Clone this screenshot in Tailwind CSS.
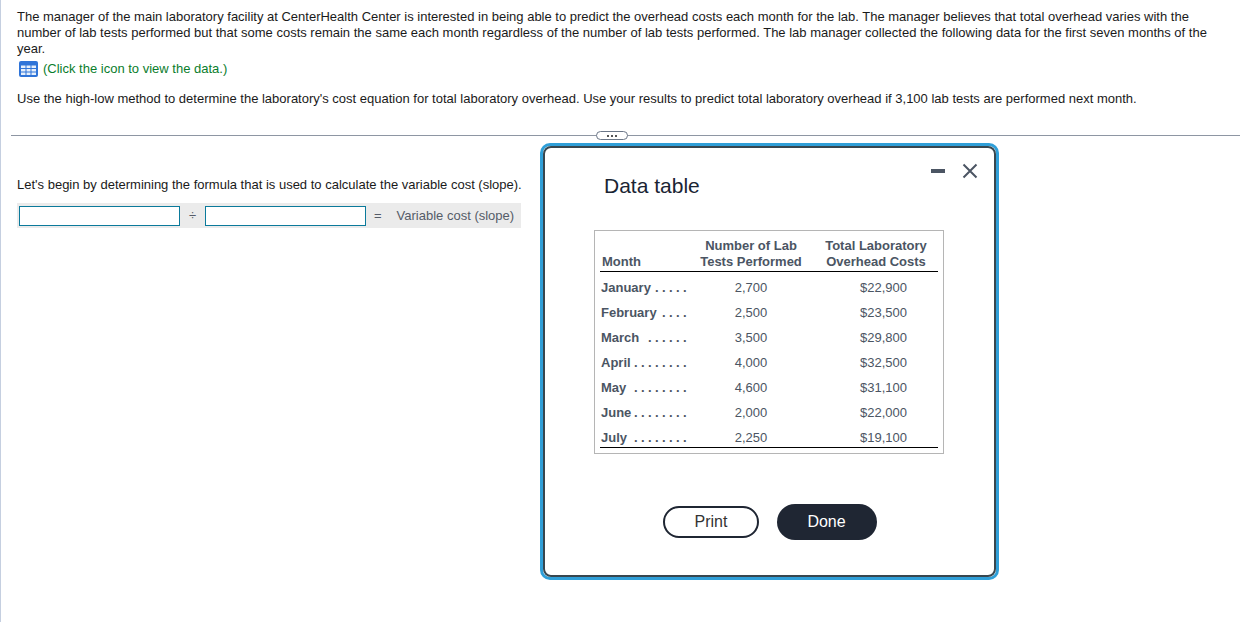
<!DOCTYPE html>
<html lang="en">
<head>
<meta charset="UTF-8">
<title>Data table</title>
<script src="https://cdn.jsdelivr.net/npm/@tailwindcss/browser@4"></script>
</head>
<body class="bg-white font-['Liberation_Sans',Arial,sans-serif] text-[13px] leading-[16px] text-[#1a1a1a]">
<div class="relative h-[622px] w-[1246px] overflow-hidden border-l border-[#c5cfe0]">

  <!-- question text -->
  <div class="pl-[16px] pr-[26px] pt-[9px]">
    <p>The manager of the main laboratory facility at CenterHealth Center is interested in being able to predict the overhead costs each month for the lab. The manager believes that total overhead varies with the number of lab tests performed but that some costs remain the same each month regardless of the number of lab tests performed. The lab manager collected the following data for the first seven months of the year.</p>
    <div class="mt-[4px] flex items-center gap-[5px] text-[#0a7d2c]">
      <svg width="19" height="16" viewBox="0 0 19 16" class="ml-[2px]">
        <rect x="0" y="0" width="19" height="16" rx="2" fill="#2f74d8"/>
        <path d="M2 4.500h4.500v2.500H2zM7.500 4.500h4v2.500h-4zM12.500 4.500H17v2.500h-4.500zM2 8h4.500v2.500H2zM7.500 8h4v2.500h-4zM12.500 8H17v2.500h-4.500zM2 11.500h4.500V14H2zM7.500 11.500h4V14h-4zM12.500 11.500H17V14h-4.500z" fill="#e6effb"/>
      </svg>
      <span>(Click the icon to view the data.)</span>
    </div>
    <p class="mt-[14px]">Use the high-low method to determine the laboratory's cost equation for total laboratory overhead. Use your results to predict total laboratory overhead if 3,100 lab tests are performed next month.</p>
  </div>

  <!-- divider -->
  <div class="relative ml-[10px] mr-[6px] mt-[28px] h-px bg-[#8e96a3]">
    <div class="absolute left-[585px] top-[-4px] flex h-[9px] w-[32px] items-center justify-center gap-[2px] rounded-full border border-[#6b7687] bg-white">
      <span class="h-[2px] w-[2px] bg-[#555]"></span><span class="h-[2px] w-[2px] bg-[#555]"></span><span class="h-[2px] w-[2px] bg-[#555]"></span>
    </div>
  </div>

  <!-- formula -->
  <div class="ml-[16px] mt-[41px] w-[504px]">
    <p class="whitespace-nowrap">Let's begin by determining the formula that is used to calculate the variable cost (slope).</p>
    <div class="mt-[10px] flex h-[25px] items-center bg-[#ebebeb] pl-[2px] text-[#555c68]">
      <div class="h-[20px] w-[161px] border border-[#0b7a9b] bg-white"></div>
      <span class="w-[25px] text-center">÷</span>
      <div class="h-[20px] w-[161px] border border-[#0b7a9b] bg-white"></div>
      <span class="ml-[8px]">=</span>
      <span class="ml-[15px]">Variable cost (slope)</span>
    </div>
  </div>

  <!-- data table dialog -->
  <div class="absolute left-[539px] top-[143px] flex h-[437px] w-[459px] flex-col rounded-[10px] border-[3px] border-[#2f9fd8] bg-white">
    <div class="flex h-full flex-col rounded-[8px] border-2 border-[#37474f]">
      <div class="flex h-[82px] items-start justify-between">
        <h2 class="ml-[59px] mt-[26px] text-[21px] leading-[24px] text-[#1a2433]">Data table</h2>
        <div class="mr-[16px] mt-[15px] flex items-center gap-[17px]">
          <span class="h-[4px] w-[14px] bg-[#4b5563]"></span>
          <svg width="16" height="16" viewBox="0 0 16 16"><path d="M1.500 1.500l13 13M14.500 1.500l-13 13" stroke="#4b5563" stroke-width="2" fill="none"/></svg>
        </div>
      </div>

      <div class="ml-[49px] w-[350px] border border-[#b5b5b5] px-[5px] pb-[5px] pt-[7px] text-[13px] text-[#4b5563]">
        <div class="grid grid-cols-[90px_122px_126px] items-end border-b border-black pb-px font-bold leading-[16px]">
          <span class="pl-[2px]">Month</span>
          <span class="text-center">Number of Lab<br>Tests Performed</span>
          <span class="pl-[2px] text-center">Total Laboratory<br>Overhead Costs</span>
        </div>
        <div class="h-[176px] border-b border-black pt-[3px]">
          <div class="grid h-[25px] grid-cols-[90px_122px_126px] items-center"><span class="flex justify-between pl-[1px] font-bold"><span>January</span><span class="tracking-[3.400px]">.....</span></span><span class="text-center">2,700</span><span class="pr-[31px] text-right">$22,900</span></div>
          <div class="grid h-[25px] grid-cols-[90px_122px_126px] items-center"><span class="flex justify-between pl-[1px] font-bold"><span>February</span><span class="tracking-[3.400px]">....</span></span><span class="text-center">2,500</span><span class="pr-[31px] text-right">$23,500</span></div>
          <div class="grid h-[25px] grid-cols-[90px_122px_126px] items-center"><span class="flex justify-between pl-[1px] font-bold"><span>March</span><span class="tracking-[3.400px]">......</span></span><span class="text-center">3,500</span><span class="pr-[31px] text-right">$29,800</span></div>
          <div class="grid h-[25px] grid-cols-[90px_122px_126px] items-center"><span class="flex justify-between pl-[1px] font-bold"><span>April</span><span class="tracking-[3.400px]">........</span></span><span class="text-center">4,000</span><span class="pr-[31px] text-right">$32,500</span></div>
          <div class="grid h-[25px] grid-cols-[90px_122px_126px] items-center"><span class="flex justify-between pl-[1px] font-bold"><span>May</span><span class="tracking-[3.400px]">........</span></span><span class="text-center">4,600</span><span class="pr-[31px] text-right">$31,100</span></div>
          <div class="grid h-[25px] grid-cols-[90px_122px_126px] items-center"><span class="flex justify-between pl-[1px] font-bold"><span>June</span><span class="tracking-[3.400px]">........</span></span><span class="text-center">2,000</span><span class="pr-[31px] text-right">$22,000</span></div>
          <div class="grid h-[25px] grid-cols-[90px_122px_126px] items-center"><span class="flex justify-between pl-[1px] font-bold"><span>July</span><span class="tracking-[3.400px]">........</span></span><span class="text-center">2,250</span><span class="pr-[31px] text-right">$19,100</span></div>
        </div>
      </div>

      <div class="mt-[50px] flex justify-center gap-[18px] text-[16px]">
        <button class="mt-[2px] h-[32px] w-[96px] rounded-full border-2 border-[#1f2633] pl-[1px] text-[#333]">Print</button>
        <button class="h-[36px] w-[100px] rounded-full bg-[#1f2633] text-white">Done</button>
      </div>
    </div>
  </div>
</div>
</body>
</html>
